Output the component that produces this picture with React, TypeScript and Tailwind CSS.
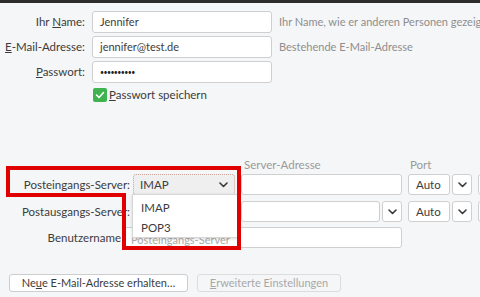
import React from "react";

const Chevron = () => (
  <svg width="9" height="6" viewBox="0 0 9 6" className="shrink-0">
    <polyline points="1,1 4.5,4.5 8,1" fill="none" stroke="#3a3a3a" strokeWidth="1.6" strokeLinecap="round" strokeLinejoin="round" />
  </svg>
);

const box = "h-[21px] bg-white border border-[#cfcfcf] rounded-[3px] shrink-0";

export default function App() {
  return (
    <div className="relative w-[480px] h-[297px] overflow-hidden bg-[#f5f6f7] text-[11.5px] leading-[14px] text-[#3c3c3c] font-['Lato',sans-serif]">
      <div className="h-[3px] bg-[#2d2d2d]" />

      {/* top form */}
      <div className="pt-[8px] flex flex-col gap-[3px]">
        <div className="flex items-center h-[22px]">
          <div className="w-[85px] text-right shrink-0">Ihr <span className="underline">N</span>ame:</div>
          <div className="ml-[7px] w-[180px] h-[22px] bg-white border border-[#cfcfcf] rounded-[3px] flex items-center pl-[7px] shrink-0 text-[11px]">Jennifer</div>
          <div className="ml-[7px] whitespace-nowrap text-[#8e8e8e] text-[11px]">Ihr Name, wie er anderen Personen gezeigt wird</div>
        </div>
        <div className="flex items-center h-[22px]">
          <div className="w-[85px] text-right shrink-0"><span className="underline">E</span>-Mail-Adresse:</div>
          <div className="ml-[7px] w-[180px] h-[22px] bg-white border border-[#cfcfcf] rounded-[3px] flex items-center pl-[7px] shrink-0 text-[11px]">jennifer@test.de</div>
          <div className="ml-[7px] whitespace-nowrap text-[#8e8e8e] text-[11px]">Bestehende E-Mail-Adresse</div>
        </div>
        <div className="flex items-center h-[22px]">
          <div className="w-[85px] text-right shrink-0"><span className="underline">P</span>asswort:</div>
          <div className="ml-[7px] w-[180px] h-[22px] bg-white border border-[#cfcfcf] rounded-[3px] flex items-center pl-[7px] shrink-0 text-[7px] tracking-[-0.6px] text-[#222]">••••••••••</div>
        </div>
      </div>

      <div className="mt-[5px] ml-[93px] flex items-center h-[14px]">
        <div className="w-[14px] h-[14px] rounded-[2px] bg-[#3eb34f] flex items-center justify-center">
          <svg width="10" height="8" viewBox="0 0 10 8">
            <polyline points="1.5,4 4,6.5 8.5,1.5" fill="none" stroke="white" strokeWidth="1.6" strokeLinecap="round" strokeLinejoin="round" />
          </svg>
        </div>
        <div className="ml-[2px]"><span className="underline">P</span>asswort speichern</div>
      </div>

      {/* server section */}
      <div className="mt-[56px] flex h-[14px] items-center text-[#9a9a9a]">
        <div className="w-[244px] shrink-0" />
        <div className="w-[166px] shrink-0">Server-Adresse</div>
        <div>Port</div>
      </div>

      <div className="mt-[2px] flex items-center h-[21px]">
        <div className="w-[130px] text-right shrink-0">Posteingangs-Server:</div>
        <div className="ml-[3px] w-[102px] h-[21px] rounded-[3px] border border-dotted border-[#c9a39a] bg-[#efefef] flex items-center justify-between pl-[6px] pr-[6px] shrink-0">
          <span>IMAP</span>
          <Chevron />
        </div>
        <div className={`${box} ml-[6px] w-[161px]`} />
        <div className={`${box} ml-[6px] w-[42px] flex items-center pl-[7px]`}>Auto</div>
        <div className={`${box} ml-[2px] w-[20px] flex items-center justify-center`}><Chevron /></div>
        <div className={`${box} ml-[6px] w-[40px]`} />
      </div>

      <div className="mt-[6px] flex items-center h-[21px]">
        <div className="w-[130px] text-right shrink-0 whitespace-nowrap">Postausgangs-Server:</div>
        <div className="ml-[3px] w-[102px] shrink-0" />
        <div className={`${box} ml-[6px] w-[139px]`} />
        <div className={`${box} ml-[2px] w-[20px] flex items-center justify-center`}><Chevron /></div>
        <div className={`${box} ml-[6px] w-[42px] flex items-center pl-[7px]`}>Auto</div>
        <div className={`${box} ml-[2px] w-[20px] flex items-center justify-center`}><Chevron /></div>
        <div className={`${box} ml-[6px] w-[40px]`} />
      </div>

      <div className="mt-[5px] flex items-center h-[21px]">
        <div className="w-[121px] text-right shrink-0 whitespace-nowrap">Benutzername</div>
        <div className={`${box} ml-[3px] w-[278px] flex items-center pl-[6px] pt-[4px] text-[#ababab] whitespace-nowrap text-[11px]`}>Posteingangs-Server</div>
      </div>

      {/* buttons */}
      <div className="mt-[26px] flex items-center ml-[9px] gap-[9px] text-[11px]">
        <div className="w-[179px] h-[18px] bg-white border border-[#cdcdcd] rounded-[3px] flex items-center justify-center">
          Ne<span className="underline">u</span>e E-Mail-Adresse erhalten…
        </div>
        <div className="w-[144px] h-[18px] border border-[#dcdcdc] rounded-[3px] flex items-center justify-center text-[#a8a8a8]">
          <span className="underline">E</span>rweiterte Einstellungen
        </div>
      </div>

      {/* dropdown popup */}
      <div className="absolute left-[132px] top-[194px] w-[106px] h-[44px] bg-white border border-[#d6d6d6] shadow-[0_1px_3px_rgba(0,0,0,0.15)] pt-[3px]">
        <div className="h-[20px] flex items-center pl-[8px]">IMAP</div>
        <div className="h-[20px] flex items-center pl-[8px]">POP3</div>
      </div>

      {/* red annotation */}
      <svg className="absolute left-0 top-0 pointer-events-none" width="480" height="297" viewBox="0 0 480 297">
        <path d="M8 168 H239 V248 H124 V195 H8 Z" fill="none" stroke="#e00000" strokeWidth="4" />
      </svg>
    </div>
  );
}
